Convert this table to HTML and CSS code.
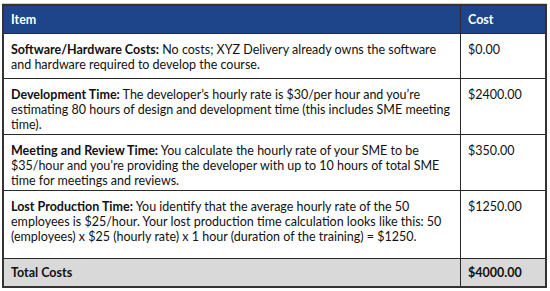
FILE: index.html
```html
<!DOCTYPE html>
<html>
<head>
<meta charset="utf-8">
<link rel="stylesheet" href="styles.css">
</head>
<body>
<div class="frame">
<table class="costs">
  <thead>
    <tr><th class="item">Item</th><th class="cost">Cost</th></tr>
  </thead>
  <tbody>
    <tr class="r1">
      <td><b>Software/Hardware Costs:</b> No costs; XYZ Delivery already owns the software<br>and hardware required to develop the course.</td>
      <td>$0.00</td>
    </tr>
    <tr class="r2">
      <td><b>Development Time:</b> The developer’s hourly rate is $30/per hour and you’re<br>estimating 80 hours of design and development time (this includes SME meeting<br>time).</td>
      <td>$2400.00</td>
    </tr>
    <tr class="r3">
      <td><b>Meeting and Review Time:</b> You calculate the hourly rate of your SME to be<br>$35/hour and you’re providing the developer with up to 10 hours of total SME<br>time for meetings and reviews.</td>
      <td>$350.00</td>
    </tr>
    <tr class="r4">
      <td><b>Lost Production Time:</b> You identify that the average hourly rate of the 50<br>employees is $25/hour. Your lost production time calculation looks like this: 50<br>(employees) x $25 (hourly rate) x 1 hour (duration of the training) = $1250.</td>
      <td>$1250.00</td>
    </tr>
    <tr class="total">
      <td><b>Total Costs</b></td>
      <td><b>$4000.00</b></td>
    </tr>
  </tbody>
</table>
</div>
</body>
</html>
```
FILE: styles.css
```css
html, body {
  margin: 0;
  padding: 0;
  background: #ffffff;
}
.frame {
  padding: 4px 3px 0 2px;
}
.costs {
  width: 545px;
  border-collapse: collapse;
  font-family: Lato, "Open Sans", sans-serif;
  font-size: 12.5px;
  line-height: 15px;
  color: #111;
  border: 2px solid #333;
  box-shadow: 0 -1px 0 #cfcfcf;
}
.costs th, .costs td {
  border: 1px solid #2a2a2a;
  text-align: left;
  vertical-align: top;
  padding: 0 7px;
}
.costs th {
  background: #1e4589;
  color: #fff;
  font-weight: bold;
  height: 27px;
  vertical-align: middle;
}
.costs th.item { width: 442px; }
.costs td { padding-top: 8px; }
.r1 td { height: 36px; }
.r2 td { height: 47px; }
.r3 td { height: 47px; }
.r4 td { height: 59px; }
.total td {
  background: #d9d9d9;
  height: 27px;
  padding-top: 0;
  vertical-align: middle;
}
.costs b { font-weight: bold; }
```
